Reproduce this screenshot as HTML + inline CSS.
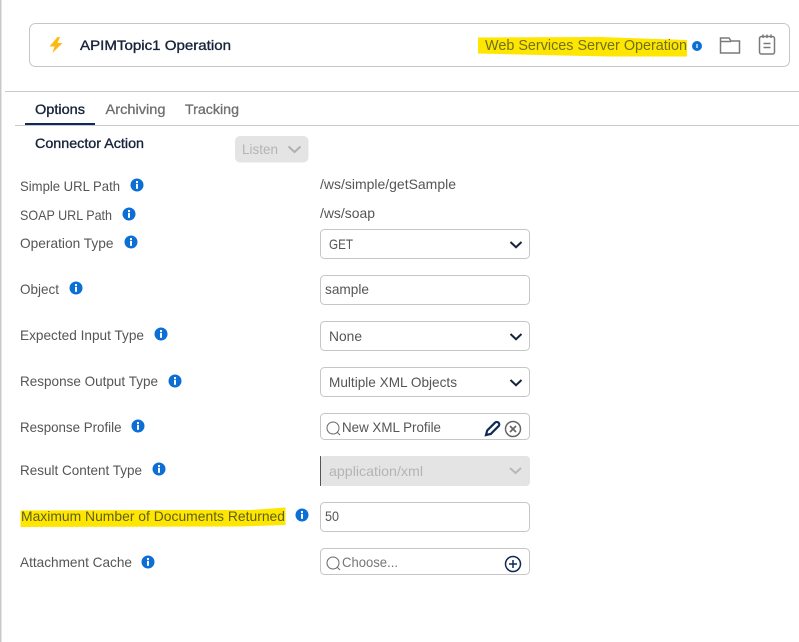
<!DOCTYPE html>
<html lang="en"><head><meta charset="utf-8"><title>APIMTopic1 Operation</title>
<style>
html,body{margin:0;padding:0;background:#fff;width:799px;height:642px;overflow:hidden}
svg{display:block}
text{font-family:"Liberation Sans",sans-serif;font-size:14px;fill:#555}
.d{fill:#16233a;stroke:#16233a;stroke-width:.35px}
.t{fill:#6f6f6f;stroke:#6f6f6f;stroke-width:.3px}
.g{fill:#b4b4b4}
.box{fill:#fff;stroke:#c6c6c6;stroke-width:1}
.ch{fill:none;stroke:#16233a;stroke-width:2}
.ic{fill:#0b6fd6}
.it{fill:#fff}
</style></head><body>
<svg width="799" height="642" viewBox="0 0 799 642" xmlns="http://www.w3.org/2000/svg">
<defs>
<g id="i"><circle r="6.5" class="ic"/><rect x="-1" y="-1.2" width="2" height="5" class="it"/><rect x="-1" y="-4" width="2" height="2" class="it"/></g>
<path id="c" d="M-5.5-2.5L0 2.7 5.500-2.500" class="ch"/>
<g id="s" fill="none" stroke="#666" stroke-width="1"><circle cx="-1" cy="-1" r="6"/><path d="M3.300 3.300L6 6"/></g>
</defs>
<rect x="0" y="0" width="1.500" height="642" fill="#c8c8c8"/>
<rect x="29.500" y="23.500" width="760" height="43" rx="6" class="box"/>
<path d="M57.500 37L49.500 46.500H54.500L52.500 53 62.500 43H57.500L60 37z" fill="#fdb913"/>
<text x="80" y="50" class="d" textLength="151" lengthAdjust="spacingAndGlyphs">APIMTopic1 Operation</text>
<path d="M478 37.500L600 37 687 40V56.500L610 56.500 540 55 478 53.500z" fill="#fee600"/>
<text x="485" y="50" style="fill:#70701a;font-size:14.500px" textLength="202" lengthAdjust="spacingAndGlyphs">Web Services Server Operation</text>
<circle cx="697" cy="46" r="5" class="ic"/><rect x="696.400" y="44" width="1.200" height="4" class="it"/>
<g fill="none" stroke="#7a7a7a" stroke-width="1.500">
<path d="M720.500 38h8.500l2 3h8.500v12h-19z"/><path d="M720.500 41.500h10.500"/>
<rect x="759.500" y="36.500" width="15" height="17.500" rx="2"/>
<path d="M763 34.500v3.500M767 34.500v3.500M771 34.500v3.500M763.500 43.500h7M763.500 47.500h7"/>
</g>
<rect x="5" y="91" width="794" height="1" fill="#c8c8c8"/>
<rect x="15" y="125" width="784" height="1" fill="#c8c8c8"/>
<rect x="25" y="123" width="70" height="2" fill="#0c2a5c"/>
<text x="35" y="114" class="d" textLength="50" lengthAdjust="spacingAndGlyphs">Options</text>
<text x="105.500" y="114" class="t" textLength="60" lengthAdjust="spacingAndGlyphs">Archiving</text>
<text x="185" y="114" class="t" textLength="54" lengthAdjust="spacingAndGlyphs">Tracking</text>
<text x="35" y="148" class="d" textLength="109" lengthAdjust="spacingAndGlyphs">Connector Action</text>
<rect x="235" y="136" width="73.500" height="26.500" rx="5" fill="#e4e4e4"/>
<text x="242" y="154" class="g" textLength="36" lengthAdjust="spacingAndGlyphs">Listen</text>
<path d="M288.500 146.500L294.500 152 300.500 146.500" fill="none" stroke="#b0b0b0" stroke-width="2"/>

<text x="20" y="191" textLength="100" lengthAdjust="spacingAndGlyphs">Simple URL Path</text><use href="#i" x="137" y="185"/>
<text x="20" y="220" textLength="92" lengthAdjust="spacingAndGlyphs">SOAP URL Path</text><use href="#i" x="129" y="214"/>
<text x="20" y="248" textLength="93.500" lengthAdjust="spacingAndGlyphs">Operation Type</text><use href="#i" x="131" y="242"/>
<text x="20" y="294" textLength="39" lengthAdjust="spacingAndGlyphs">Object</text><use href="#i" x="76" y="288"/>
<text x="20" y="340" textLength="124" lengthAdjust="spacingAndGlyphs">Expected Input Type</text><use href="#i" x="161" y="334"/>
<text x="20" y="386" textLength="138" lengthAdjust="spacingAndGlyphs">Response Output Type</text><use href="#i" x="175" y="381"/>
<text x="20" y="432" textLength="101.500" lengthAdjust="spacingAndGlyphs">Response Profile</text><use href="#i" x="138" y="426"/>
<text x="20" y="475" textLength="122" lengthAdjust="spacingAndGlyphs">Result Content Type</text><use href="#i" x="159" y="469"/>
<path d="M20.500 510.500L180 510 250 510 285.500 507.500V525L240 526.500 20.500 527z" fill="#fee600"/>
<text x="21" y="521" style="fill:#5f5f1c" textLength="264" lengthAdjust="spacingAndGlyphs">Maximum Number of Documents Returned</text><use href="#i" x="302" y="515"/>
<text x="20" y="567" textLength="112" lengthAdjust="spacingAndGlyphs">Attachment Cache</text><use href="#i" x="148" y="562"/>

<text x="320" y="189" textLength="136" lengthAdjust="spacingAndGlyphs">/ws/simple/getSample</text>
<text x="320" y="218" textLength="55" lengthAdjust="spacingAndGlyphs">/ws/soap</text>

<rect x="320.500" y="229.500" width="209" height="29" rx="4" class="box"/>
<text x="329" y="249" textLength="24" lengthAdjust="spacingAndGlyphs">GET</text><use href="#c" x="516" y="244.500"/>
<rect x="320.500" y="275.500" width="209" height="29" rx="4" class="box"/>
<text x="325" y="294" textLength="44" lengthAdjust="spacingAndGlyphs">sample</text>
<rect x="320.500" y="321.500" width="209" height="29" rx="4" class="box"/>
<text x="329" y="341" textLength="33" lengthAdjust="spacingAndGlyphs">None</text><use href="#c" x="516" y="336.500"/>
<rect x="320.500" y="367.500" width="209" height="29" rx="4" class="box"/>
<text x="329" y="387" textLength="128" lengthAdjust="spacingAndGlyphs">Multiple XML Objects</text><use href="#c" x="516" y="382.500"/>

<rect x="320.500" y="413.500" width="209" height="26" rx="4" class="box"/>
<use href="#s" x="334" y="429"/>
<text x="342" y="432" textLength="99" lengthAdjust="spacingAndGlyphs">New XML Profile</text>
<path d="M486 435l1.200-4.500 7.800-7.800c1-1 2.500-1 3.500 0s1 2.500 0 3.500l-7.800 7.800z" fill="none" stroke="#0f2a55" stroke-width="2.200"/>
<circle cx="513" cy="429" r="7.500" fill="none" stroke="#666" stroke-width="1.500"/>
<path d="M510 426l6 6M516 426l-6 6" stroke="#666" stroke-width="1.700"/>

<rect x="320" y="456" width="210" height="30" rx="4" fill="#e4e4e4"/>
<rect x="320" y="456" width="1" height="30" fill="#555"/>
<text x="329" y="476" class="g" textLength="94" lengthAdjust="spacingAndGlyphs">application/xml</text>
<path d="M510 468l5.500 5 5.500-5" fill="none" stroke="#b8b8b8" stroke-width="2"/>

<rect x="320.500" y="502.500" width="209" height="29" rx="4" class="box"/>
<text x="325" y="521" textLength="14" lengthAdjust="spacingAndGlyphs">50</text>

<rect x="320.500" y="548.500" width="209" height="26" rx="4" class="box"/>
<use href="#s" x="334" y="564"/>
<text x="342" y="567" style="fill:#777" textLength="56" lengthAdjust="spacingAndGlyphs">Choose...</text>
<circle cx="513" cy="564" r="7.500" fill="none" stroke="#0f2a55" stroke-width="1.500"/>
<path d="M509 564h8M513 560v8" stroke="#0f2a55" stroke-width="1.500"/>
</svg>
</body></html>
